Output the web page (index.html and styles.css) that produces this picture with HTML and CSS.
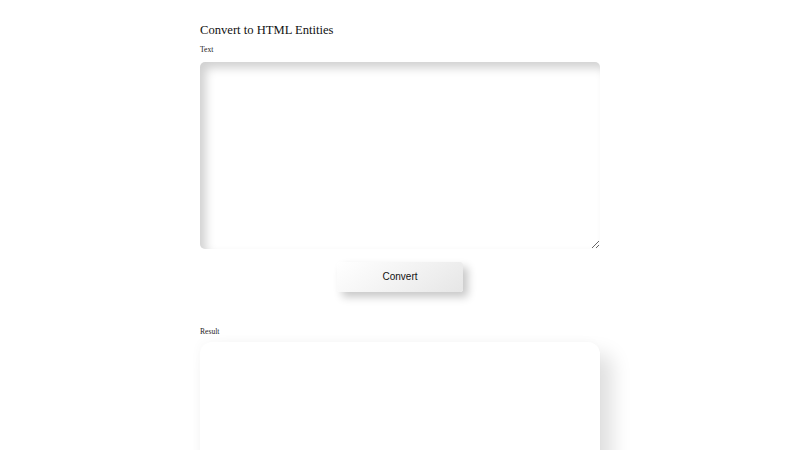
FILE: index.html
```html
<!DOCTYPE html>
<html>
<head>
<meta charset="utf-8">
<link rel="stylesheet" href="styles.css">
</head>
<body>
<main class="page">
  <h1 class="title">Convert to HTML Entities</h1>
  <label class="field-label" for="src">Text</label>
  <textarea id="src" class="input-area"></textarea>
  <div class="actions">
    <button class="convert-btn" type="button">Convert</button>
  </div>
  <div class="result-section">
    <div class="field-label">Result</div>
    <div class="result-box"></div>
  </div>
</main>
</body>
</html>
```

FILE: styles.css
```css
html, body {
  margin: 0;
  padding: 0;
  background: #ffffff;
  overflow: hidden;
}
body {
  font-family: "Liberation Serif", "Times New Roman", serif;
  color: #111;
}
.page {
  width: 400px;
  margin: 0 auto;
  padding-top: 23px;
  display: flex;
  flex-direction: column;
}
.title {
  font-size: 12.6px;
  font-weight: normal;
  line-height: 15px;
  margin: 0 0 7px 0;
}
.field-label {
  display: block;
  font-size: 7.6px;
  line-height: 9px;
  margin: 0 0 8px 0;
  color: #222;
}
.input-area {
  display: block;
  box-sizing: border-box;
  width: 400px;
  height: 187px;
  border: none;
  border-radius: 5px;
  background: #fff;
  box-shadow: inset 6px 6px 10px rgba(0,0,0,0.18), inset -3px -3px 6px rgba(255,255,255,0.9);
  outline: none;
  margin: 0;
  padding: 6px;
  font-family: "Liberation Sans", Arial, sans-serif;
}
.actions {
  display: flex;
  justify-content: center;
  margin-top: 13px;
}
.convert-btn {
  width: 126px;
  height: 30px;
  border: none;
  border-radius: 3px;
  background: linear-gradient(145deg, #ffffff 0%, #f2f2f2 55%, #e6e6e6 100%);
  box-shadow: 5px 5px 9px rgba(0,0,0,0.22), -2px -2px 5px rgba(255,255,255,0.9);
  font-family: "Liberation Sans", Arial, sans-serif;
  font-size: 10px;
  line-height: 29px;
  color: #111;
  padding: 0 0 1px 0;
}
.result-section {
  margin-top: 35px;
}
.result-section .field-label {
  margin-bottom: 6px;
}
.result-box {
  height: 200px;
  border-radius: 12px;
  background: #fff;
  box-shadow: 12px 12px 20px rgba(0,0,0,0.13), -3px -3px 8px rgba(0,0,0,0.02);
}
```
